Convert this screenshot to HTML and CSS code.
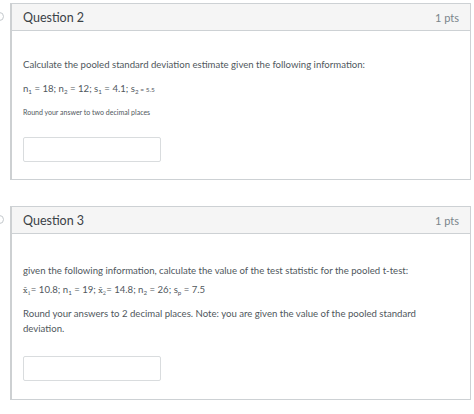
FILE: index.html
```html
<!DOCTYPE html>
<html>
<head>
<meta charset="utf-8">
<link rel="stylesheet" href="styles.css">
</head>
<body>
<div class="page">
  <div class="qrow">
    <span class="flag"></span>
    <section class="card">
      <header class="head">
        <span class="title">Question 2</span>
        <span class="pts">1 pts</span>
      </header>
      <div class="body b1">
        <p class="line c1">Calculate the pooled standard deviation estimate given the following information:</p>
        <p class="line">n<sub>1</sub> = 18; n<sub>2</sub> = 12; s<sub>1</sub> = 4.1; s<sub>2</sub><span class="tiny"> = 5.5</span></p>
        <p class="small">Round your answer to two decimal places</p>
        <div class="answer"></div>
      </div>
    </section>
  </div>
  <div class="qrow q3">
    <span class="flag"></span>
    <section class="card">
      <header class="head">
        <span class="title">Question 3</span>
        <span class="pts">1 pts</span>
      </header>
      <div class="body b2">
        <p class="line d1">given the following information, calculate the value of the test statistic for the pooled t-test:</p>
        <p class="line d2"><span class="xbar">x̄<sub>1</sub></span>= 10.8; n<sub>1</sub> = 19; <span class="xbar">x̄<sub>2</sub></span>= 14.8; n<sub>2</sub> = 26; s<sub>p</sub> = 7.5</p>
        <p class="line d3">Round your answers to 2 decimal places. Note: you are given the value of the pooled standard deviation.</p>
        <div class="answer a2"></div>
      </div>
    </section>
  </div>
</div>
</body>
</html>
```
FILE: styles.css
```css
html, body {
  margin: 0;
  padding: 0;
  background: #fff;
}
body {
  font-family: Lato, "Open Sans", sans-serif;
  color: #50575d;
}
.page {
  padding-top: 3px;
  width: 474px;
  height: 414px;
  overflow: hidden;
}
.qrow {
  display: flex;
  align-items: flex-start;
}
.q3 {
  margin-top: 26px;
}
.flag {
  width: 7px;
  height: 7px;
  border: 1px solid #c3c8cc;
  border-radius: 50%;
  margin-left: -5px;
  margin-right: 6px;
  margin-top: 9px;
  flex: none;
}
.card {
  width: 458px;
  border: 1px solid #cdd1d4;
  border-left: 2px solid #cdd0d2;
  flex: none;
}
.head {
  height: 26px;
  background: #f5f5f5;
  border-bottom: 1px solid #cdd1d4;
  display: flex;
  align-items: center;
  justify-content: space-between;
  padding: 0 11px 0 11px;
}
.title {
  font-size: 12.5px;
  color: #3a4146;
}
.pts {
  font-size: 11px;
  color: #7a848b;
}
.body {
  padding: 0 11px;
}
.b1 {
  padding-top: 26px;
  padding-bottom: 17px;
}
.b2 {
  padding-top: 29px;
  padding-bottom: 18px;
}
.line {
  margin: 0;
  font-size: 9.6px;
  line-height: 15px;
}
.c1 {
  margin-bottom: 9px;
}
.d1 {
  margin-bottom: 4px;
}
.d2 {
  margin-bottom: 8px;
}
sub {
  font-size: 65%;
  vertical-align: -2px;
  line-height: 0;
}
.tiny {
  font-size: 6.5px;
}
.small {
  margin: 10px 0 0;
  font-size: 7px;
  line-height: 10px;
}
.answer {
  margin-top: 20px;
  width: 136px;
  height: 23px;
  border: 1px solid #d9dcde;
  border-radius: 2px;
}
.a2 {
  margin-top: 20px;
}
.xbar {
  font-family: "DejaVu Serif", serif;
  font-size: 8px;
}
```
